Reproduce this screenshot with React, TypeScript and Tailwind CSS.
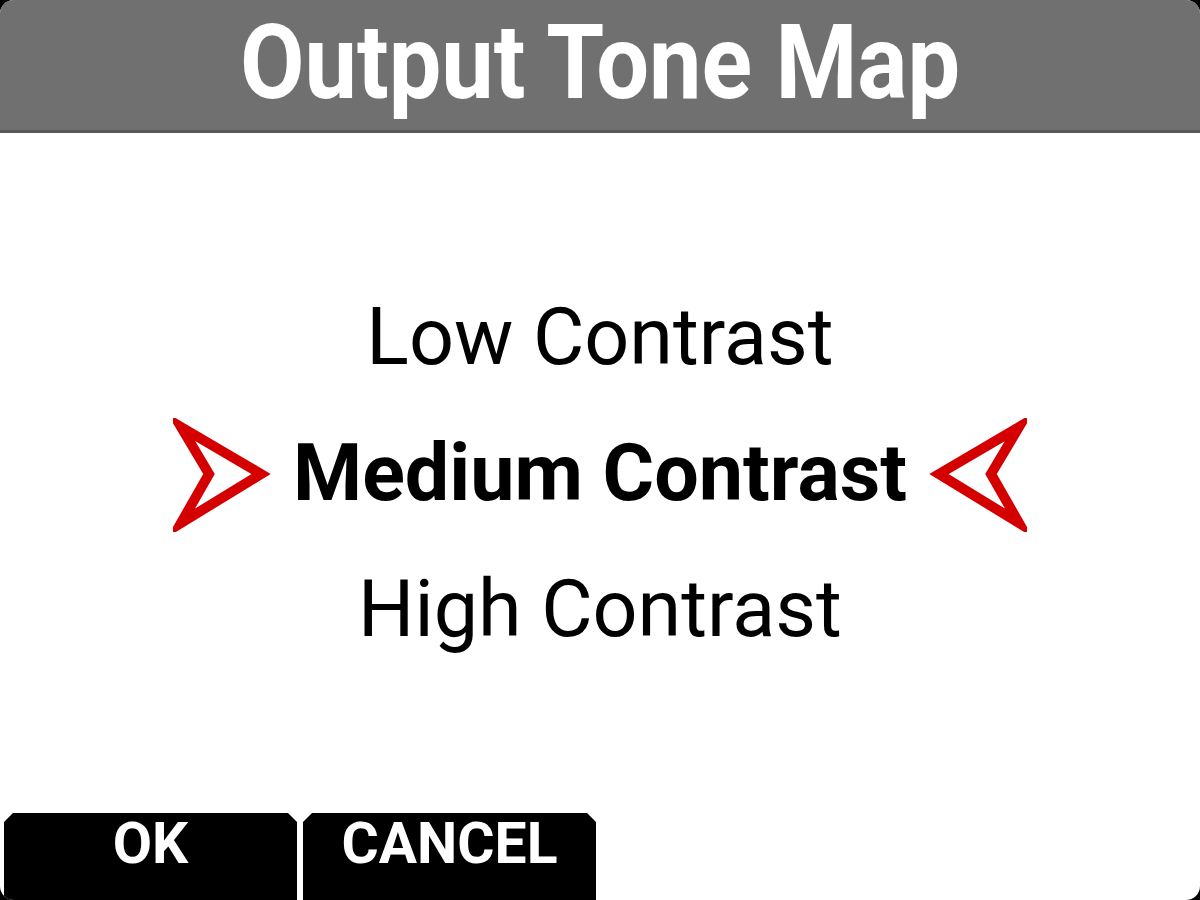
import React from 'react';

const options = ['Low Contrast', 'Medium Contrast', 'High Contrast'];
const selected = 1;

const Pointer = ({ flip }: { flip?: boolean }) => (
  <svg
    width="100"
    height="114"
    viewBox="0 0 100 114"
    className={flip ? 'shrink-0 -scale-x-100 mt-[4px]' : 'shrink-0 mt-[4px]'}
  >
    <polygon
      points="8,9 88,56 8,105 36,56"
      fill="none"
      stroke="#d40000"
      strokeWidth="10"
      strokeLinejoin="miter"
      strokeMiterlimit="10"
    />
  </svg>
);

export default function App() {
  return (
    <div className="w-[1200px] h-[900px] bg-black overflow-hidden" style={{ fontFamily: 'Roboto, "Liberation Sans", sans-serif' }}>
      <div className="w-full h-full bg-white rounded-[14px] overflow-hidden flex flex-col">
        <div className="h-[133px] shrink-0 bg-[#707070] border-b-[3px] border-[#585858] flex items-center justify-center">
          <span className="inline-block text-white font-bold text-[104px] leading-none scale-x-[0.9] -mt-[4px]">
            Output Tone Map
          </span>
        </div>

        <div className="flex-1 flex flex-col items-center pt-[136px]">
          {options.map((opt, i) => (
            <div key={opt} className="flex items-center justify-center h-[136px]">
              {i === selected ? (
                <div className="flex items-center gap-[20px]">
                  <Pointer />
                  <span className="text-black font-bold text-[79px] leading-[136px]">{opt}</span>
                  <Pointer flip />
                </div>
              ) : (
                <span className="text-black text-[79px] leading-[136px]">{opt}</span>
              )}
            </div>
          ))}
        </div>

        <div className="h-[87px] shrink-0 flex gap-[6px] pl-[4px]">
          {['OK', 'CANCEL'].map((b) => (
            <button
              key={b}
              className="w-[293px] h-full bg-black text-white font-bold text-[57px] leading-none pb-[26px] [clip-path:polygon(9px_0,calc(100%-9px)_0,100%_9px,100%_100%,0_100%,0_9px)]"
            >
              {b}
            </button>
          ))}
        </div>
      </div>
    </div>
  );
}
